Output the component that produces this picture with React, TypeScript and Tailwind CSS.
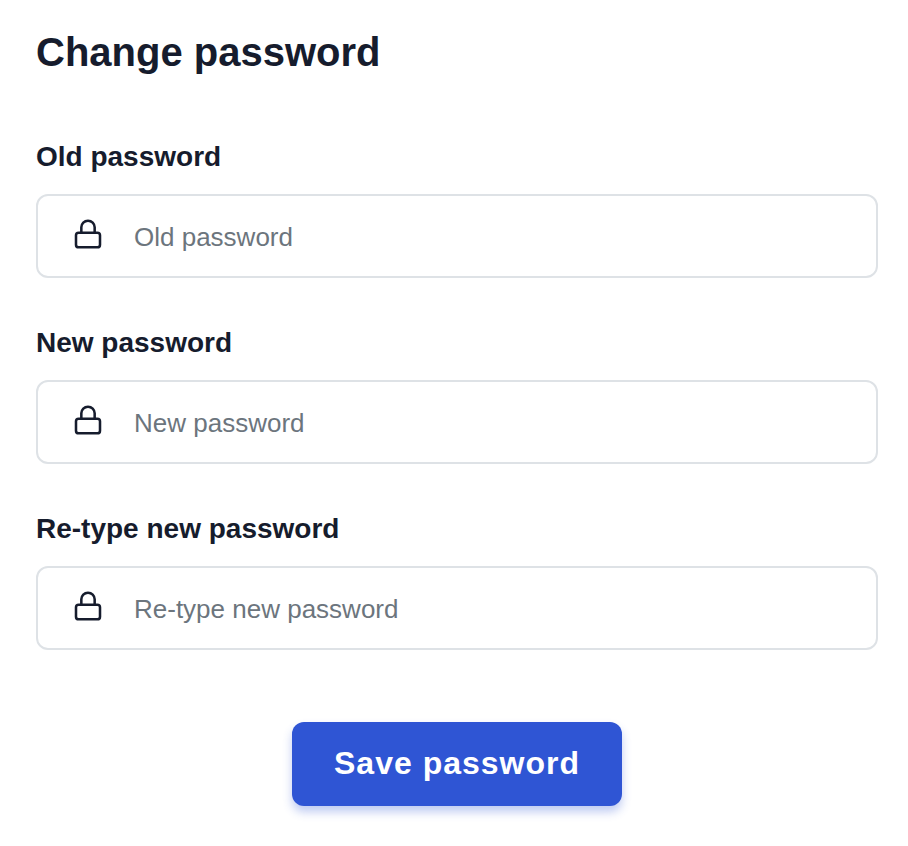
import { Lock } from "lucide-react";

type PasswordFieldProps = {
  id: string;
  label: string;
};

const fields: PasswordFieldProps[] = [
  { id: "old-password", label: "Old password" },
  { id: "new-password", label: "New password" },
  { id: "retype-password", label: "Re-type new password" },
];

function PasswordField({ id, label }: PasswordFieldProps) {
  return (
    <div>
      <label htmlFor={id} className="block h-[38px] text-[28px] leading-[38px] font-bold">
        {label}
      </label>
      <div className="mt-[18px] flex h-[84px] items-center rounded-[12px] border-2 border-[#dee2e6] pl-[34px]">
        <Lock className="-mt-1 size-8 shrink-0" strokeWidth={1.9} />
        <input
          id={id}
          type="password"
          placeholder={label}
          className="ml-[30px] h-[76px] flex-1 bg-transparent pt-[2px] text-[26px] outline-none placeholder:text-[#6c757d]"
        />
      </div>
    </div>
  );
}

export default function App() {
  return (
    <div className="h-[846px] bg-white pt-[28px] pr-[30px] pl-[36px] font-['Liberation_Sans',Arial,sans-serif] text-[#161c2d]">
      <h1 className="h-[48px] text-[40px] leading-[48px] font-bold">Change password</h1>
      <form className="mt-[62px] flex flex-col gap-[46px]" onSubmit={(e) => e.preventDefault()}>
        {fields.map((field) => (
          <PasswordField key={field.id} {...field} />
        ))}
        <button
          type="submit"
          className="mt-[26px] h-[84px] w-[330px] self-center rounded-[12px] bg-[#2f55d4] pb-[2px] text-[32px] font-bold tracking-[1px] text-white shadow-[0_6px_10px_rgba(47,85,212,0.3)]"
        >
          Save password
        </button>
      </form>
    </div>
  );
}
